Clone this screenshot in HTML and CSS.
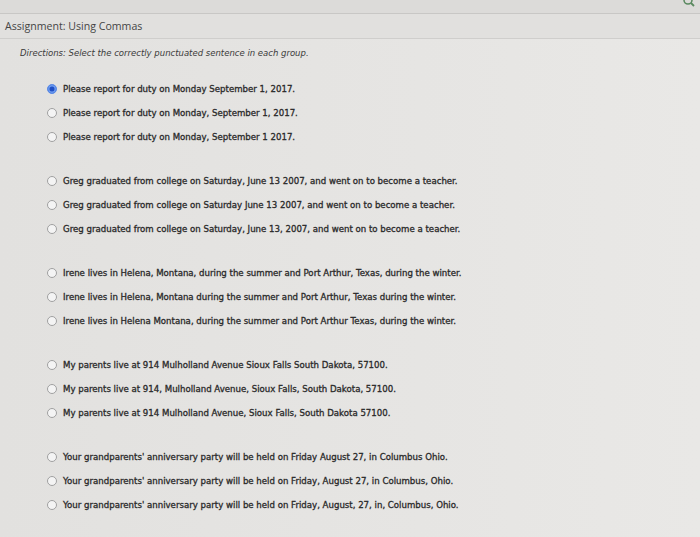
FILE: index.html
```html
<!DOCTYPE html>
<html>
<head>
<meta charset="utf-8">
<link rel="stylesheet" href="styles.css">
</head>
<body>
<div class="topbar">
  <svg class="search" width="14" height="14" viewBox="0 0 14 14"><circle cx="6" cy="4" r="4" fill="none" stroke="#5a8a60" stroke-width="1.6"/><line x1="9" y1="7" x2="12" y2="10" stroke="#5a8a60" stroke-width="1.8"/></svg>
</div>
<div class="header">Assignment: Using Commas</div>
<div class="directions">Directions: Select the correctly punctuated sentence in each group.</div>
<div class="groups">
  <div class="group">
    <label class="opt"><span class="radio on"></span>Please report for duty on Monday September 1, 2017.</label>
    <label class="opt"><span class="radio"></span>Please report for duty on Monday, September 1, 2017.</label>
    <label class="opt"><span class="radio"></span>Please report for duty on Monday, September 1 2017.</label>
  </div>
  <div class="group">
    <label class="opt"><span class="radio"></span>Greg graduated from college on Saturday, June 13 2007, and went on to become a teacher.</label>
    <label class="opt"><span class="radio"></span>Greg graduated from college on Saturday June 13 2007, and went on to become a teacher.</label>
    <label class="opt"><span class="radio"></span>Greg graduated from college on Saturday, June 13, 2007, and went on to become a teacher.</label>
  </div>
  <div class="group">
    <label class="opt"><span class="radio"></span>Irene lives in Helena, Montana, during the summer and Port Arthur, Texas, during the winter.</label>
    <label class="opt"><span class="radio"></span>Irene lives in Helena, Montana during the summer and Port Arthur, Texas during the winter.</label>
    <label class="opt"><span class="radio"></span>Irene lives in Helena Montana, during the summer and Port Arthur Texas, during the winter.</label>
  </div>
  <div class="group">
    <label class="opt"><span class="radio"></span>My parents live at 914 Mulholland Avenue Sioux Falls South Dakota, 57100.</label>
    <label class="opt"><span class="radio"></span>My parents live at 914, Mulholland Avenue, Sioux Falls, South Dakota, 57100.</label>
    <label class="opt"><span class="radio"></span>My parents live at 914 Mulholland Avenue, Sioux Falls, South Dakota 57100.</label>
  </div>
  <div class="group">
    <label class="opt"><span class="radio"></span>Your grandparents' anniversary party will be held on Friday August 27, in Columbus Ohio.</label>
    <label class="opt"><span class="radio"></span>Your grandparents' anniversary party will be held on Friday, August 27, in Columbus, Ohio.</label>
    <label class="opt"><span class="radio"></span>Your grandparents' anniversary party will be held on Friday, August, 27, in, Columbus, Ohio.</label>
  </div>
</div>
</body>
</html>
```
FILE: styles.css
```css
html, body {
  margin: 0;
  padding: 0;
}
body {
  width: 700px;
  height: 537px;
  overflow: hidden;
  background: linear-gradient(90deg, #e2e1df 0%, #e6e5e3 60%, #e9e8e6 100%);
  font-family: "DejaVu Sans", Verdana, sans-serif;
  color: #333;
}
.topbar {
  height: 13px;
  background: #dcdbd9;
  border-bottom: 1px solid #c8c7c5;
  position: relative;
}
.search {
  position: absolute;
  right: 4px;
  top: -4px;
}
.header {
  height: 24px;
  line-height: 24px;
  padding-left: 5px;
  font-family: "Open Sans", sans-serif;
  font-size: 10.6px;
  color: #454545;
  background: #e1e0de;
  border-bottom: 1px solid #cfcecc;
}
.directions {
  padding: 4px 0 0 20px;
  height: 20px;
  line-height: 20px;
  font-size: 8.5px;
  font-style: italic;
  color: #3a3a3a;
}
.groups {
  padding: 14px 0 0 47px;
  display: flex;
  flex-direction: column;
  gap: 20px;
}
.group {
  display: flex;
  flex-direction: column;
}
.opt {
  display: flex;
  align-items: center;
  height: 24px;
  font-size: 8.6px;
  color: #2a2a2a;
  -webkit-text-stroke: 0.3px #2a2a2a;
}
.radio {
  width: 8px;
  height: 8px;
  border: 1px solid #a0a0a0;
  border-radius: 50%;
  background: #f4f4f4;
  margin-right: 6px;
  flex: none;
  box-sizing: content-box;
}
.radio.on {
  background: #1f4fc4;
  border-color: #5b8ce8;
  box-shadow: inset 0 0 0 1.5px #6e9cf0;
}
```
